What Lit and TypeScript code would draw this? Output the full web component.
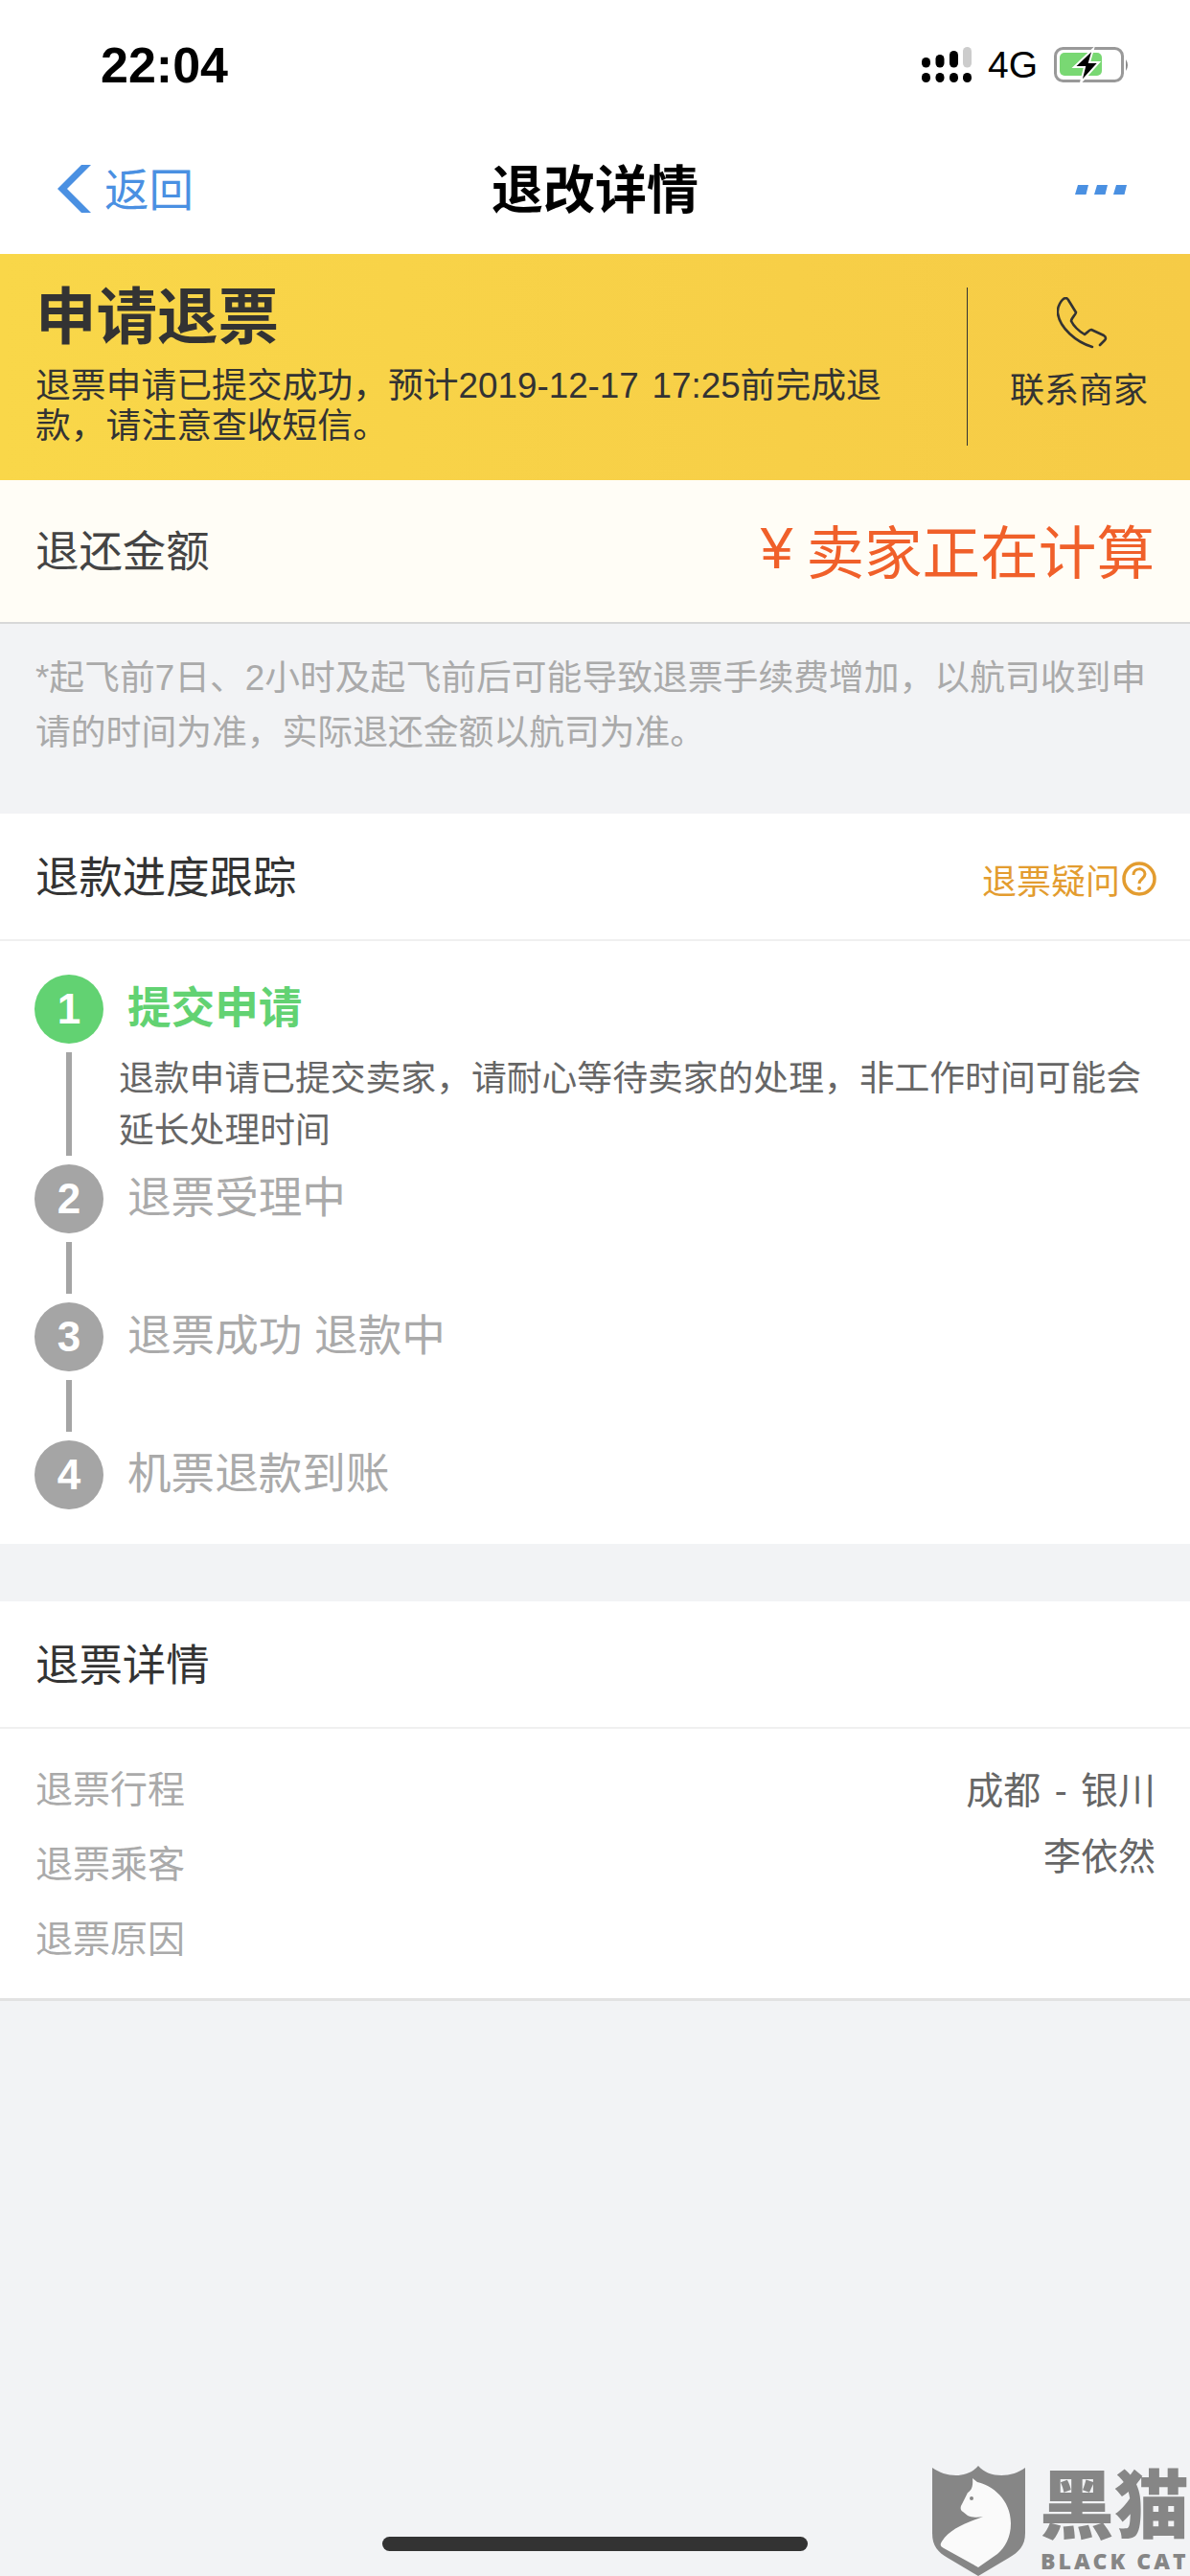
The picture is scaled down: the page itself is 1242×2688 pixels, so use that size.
import { LitElement, html, css, svg } from "lit";
import { customElement } from "lit/decorators.js";

const steps = [
  { n: 1, title: "提交申请", desc: "退款申请已提交卖家，请耐心等待卖家的处理，非工作时间可能会延长处理时间", on: true },
  { n: 2, title: "退票受理中", desc: "", on: false },
  { n: 3, title: "退票成功 退款中", desc: "", on: false },
  { n: 4, title: "机票退款到账", desc: "", on: false },
];

@customElement("app-root")
export class AppRoot extends LitElement {
  static styles = css`
    :host {
      display: block;
      position: relative;
      width: 1242px;
      height: 2688px;
      overflow: hidden;
      background: #f2f3f5;
      font-family: "Liberation Sans", "Noto Sans CJK SC", sans-serif;
      color: #333;
    }
    .head { background: #fff; height: 265px; display: flex; flex-direction: column; }
    .status { height: 136px; display: flex; align-items: center; padding: 0 62px 0 105px; }
    .time { font-size: 52px; font-weight: 700; color: #000; line-height: 136px; }
    .status-right { margin-left: auto; display: flex; align-items: center; }
    .net { font-size: 39px; color: #000; margin: 0 17px 0 17px; }
    .nav { position: relative; height: 122px; box-sizing: border-box; padding-bottom: 6px; display: flex; align-items: center; justify-content: center; }
    .back { position: absolute; left: 60px; top: 36px; display: flex; align-items: center; gap: 14px; color: #4a90e2; font-size: 46.5px; height: 50px; }
    .back span { margin-top: -5px; }
    .nav-title { font-size: 54px; font-weight: 700; color: #000; }
    .more { position: absolute; left: 1122px; top: 57px; }
    .banner { height: 236px; background: linear-gradient(90deg, #f9d749, #f6cb46); display: flex; }
    .banner-main { width: 1009px; box-sizing: border-box; padding: 33px 60px 0 37px; }
    .banner-title { font-size: 63.5px; font-weight: 700; color: #333; line-height: 66px; }
    .banner-desc { font-size: 36.8px; color: #333; line-height: 42px; margin-top: 18px; word-spacing: 3.5px; }
    .contact { flex: 1; margin-top: 35px; height: 165px; border-left: 1px solid #333; display: flex; flex-direction: column; align-items: center; box-sizing: border-box; }
    .contact svg { margin: 10px 0 0 8px; }
    .contact span { font-size: 36px; color: #333; margin-top: 22px; line-height: 44px; }
    .refund { height: 150px; background: #fffdf6; border-bottom: 2px solid #d8d8d8; box-sizing: border-box; display: flex; align-items: center; justify-content: space-between; padding: 0 37px 6px 37px; }
    .refund-label { font-size: 45.4px; color: #444; }
    .refund-value { font-size: 60.6px; color: #f0602a; display: flex; align-items: center; gap: 14px; }
    .note { height: 198px; box-sizing: border-box; padding: 28px 37px 0; font-size: 36.8px; line-height: 57px; color: #aaa; }
    .card { background: #fff; }
    .card-head { height: 133px; display: flex; align-items: center; justify-content: space-between; padding: 0 35px 6px 37px; border-bottom: 2px solid #f0f0f0; box-sizing: border-box; font-size: 45.4px; color: #333; }
    .faq { display: flex; align-items: center; gap: 2px; font-size: 36px; color: #e39c2f; margin-top: 10px; }
    .steps { height: 629px; box-sizing: border-box; padding: 35px 36px 0; }
    .step { display: grid; grid-template-columns: 72px 1fr; column-gap: 25px; }
    .circle { width: 72px; height: 72px; border-radius: 50%; background: #a5a5a5; color: #fff; font-size: 44px; font-weight: 700; display: flex; align-items: center; justify-content: center; }
    .on .circle { background: #62d272; }
    .step-title { font-size: 45.6px; line-height: 72px; color: #aaa; }
    .on .step-title { color: #62d272; font-weight: 700; }
    .rail { display: flex; justify-content: center; }
    .rail i { display: block; width: 6px; background: #a5a5a5; margin: 9px 0; height: 54px; }
    .on .rail i { height: 108px; }
    .desc { font-size: 36.8px; line-height: 54px; color: #666; margin-left: -9px; padding-top: 10px; box-sizing: border-box; }
    .gap { height: 60px; }
    .detail-body { height: 284px; box-sizing: border-box; border-bottom: 3px solid #e2e2e2; padding: 25px 37px 0; display: flex; justify-content: space-between; }
    .labels { display: flex; flex-direction: column; font-size: 39px; line-height: 78px; color: #aaa; }
    .values { text-align: right; font-size: 39px; line-height: 69px; color: #666; margin: 5px -1px 0 0; word-spacing: 3.5px; }
    .home { position: absolute; left: 399px; top: 2647px; width: 444px; height: 15px; border-radius: 8px; background: #333; }
    .mark { position: absolute; left: 973px; top: 2573px; width: 269px; height: 115px; color: #868686; }
    .mark svg { position: absolute; left: 0; top: 0; }
    .mark b { position: absolute; left: 112px; top: 4px; font-size: 78px; line-height: 78px; font-weight: 900; white-space: nowrap; }
    .mark em { position: absolute; left: 113px; top: 86px; font-style: normal; font-weight: 800; font-size: 23px; line-height: 26px; letter-spacing: 3px; white-space: nowrap; font-family: "Open Sans", sans-serif; }
  `;

  private signal() {
    const cols = [
      [960, 59, "#000"], [974.5, 56, "#000"], [989, 52, "#000"], [1003, 48, "#ccc"],
    ] as const;
    return html`<svg width="52" height="40" viewBox="960 47 52 40">
      ${cols.map(([x, y, c]) => svg`
        <rect x=${x} y=${y} width="9" height=${69.5 - y} rx="4.5" fill=${c}></rect>
        <rect x=${x} y="75" width="9" height="10" rx="4.5" fill="#000"></rect>`)}
    </svg>`;
  }

  render() {
    return html`
      <div class="head">
        <div class="status">
          <span class="time">22:04</span>
          <div class="status-right">
            ${this.signal()}
            <span class="net">4G</span>
            <svg width="80" height="40" viewBox="0 0 80 40">
              <rect x="1.5" y="2.5" width="70" height="34" rx="8" fill="none" stroke="#999" stroke-width="3"></rect>
              <rect x="6" y="7" width="44" height="24" rx="5" fill="#79d873"></rect>
              <path d="M75 14 Q79 20 75 26Z" fill="#888"></path>
              <path d="M41 3 L21 22 H32 L28 38 L47 17 H37 Z" fill="#000" stroke="#fff" stroke-width="2"></path>
            </svg>
          </div>
        </div>
        <div class="nav">
          <div class="back">
            <svg width="35" height="50" viewBox="0 0 35 50"><path d="M25 0H35L10 25L35 50H25L0 25Z" fill="#4a90e2"></path></svg>
            <span>返回</span>
          </div>
          <span class="nav-title">退改详情</span>
          <svg class="more" width="56" height="10" viewBox="0 0 56 10">
            <path d="M3 0H14L11.5 10H0ZM23 0H34L31.5 10H20ZM43 0H54L51.5 10H40Z" fill="#4a90e2"></path>
          </svg>
        </div>
      </div>

      <div class="banner">
        <div class="banner-main">
          <div class="banner-title">申请退票</div>
          <div class="banner-desc">退票申请已提交成功，预计2019-12-17 17:25前完成退款，请注意查收短信。</div>
        </div>
        <div class="contact">
          <svg width="54" height="54" viewBox="0 0 54 54">
            <path d="M37 52 C20 47 3 32 1 17 C0 10 5 2 9 1 C10 1 11 1 12 3 L20 16 C20 18 15 22 15 25 C18 31 24 36 29 39 C31 38 34 34 36 34 L49 40 C52 42 51 44 50 45 L45 50" fill="none" stroke="#333" stroke-width="2.6" stroke-linecap="round" stroke-linejoin="round"></path>
          </svg>
          <span>联系商家</span>
        </div>
      </div>

      <div class="refund">
        <span class="refund-label">退还金额</span>
        <span class="refund-value"><span>¥</span><span>卖家正在计算</span></span>
      </div>

      <div class="note">*起飞前7日、2小时及起飞前后可能导致退票手续费增加，以航司收到申请的时间为准，实际退还金额以航司为准。</div>

      <div class="card">
        <div class="card-head">
          <span>退款进度跟踪</span>
          <span class="faq">退票疑问
            <svg width="36" height="36" viewBox="0 0 36 36">
              <circle cx="18" cy="18" r="16" fill="none" stroke="#e39c2f" stroke-width="3.5"></circle>
              <path d="M12 14 C12 6 24 6 24 13 C24 18 18 18 18 23" fill="none" stroke="#e39c2f" stroke-width="3"></path>
              <circle cx="18" cy="28" r="2" fill="#e39c2f"></circle>
            </svg>
          </span>
        </div>
        <div class="steps">
          ${steps.map(
            (s, i) => html`
              <div class="step ${s.on ? "on" : ""}">
                <div class="circle">${s.n}</div>
                <div class="step-title">${s.title}</div>
                ${i < steps.length - 1
                  ? html`<div class="rail"><i></i></div><div class="desc">${s.desc}</div>`
                  : ""}
              </div>
            `
          )}
        </div>
      </div>

      <div class="gap"></div>

      <div class="card">
        <div class="card-head"><span>退票详情</span></div>
        <div class="detail-body">
          <div class="labels"><span>退票行程</span><span>退票乘客</span><span>退票原因</span></div>
          <div class="values"><div>成都 - 银川</div><div>李依然</div></div>
        </div>
      </div>

      <div class="mark">
        <svg width="100" height="115" viewBox="0 0 100 115">
          <path d="M0 2 C14 12 36 14 48 0 C60 14 84 12 97 2 V70 C97 84 90 90 80 96 L48 115 L16 96 C6 90 0 84 0 70 Z" fill="#868686"></path>
          <path d="M42 13 L47 17 C62 20 82 35 82 60 C82 75 76 85 68 92 L48 106 L12 86 C8 84 8 82 10 79 C18 66 34 60 53 53 C48 54 42 54 37 52 L32 48 C29 46 29 43 31 40 L37 28 C40 26 43 23 42 13Z" fill="#fafafa"></path>
          <circle cx="41" cy="34" r="2" fill="#868686"></circle>
        </svg>
        <b>黑猫</b>
        <em>BLACK CAT</em>
      </div>

      <div class="home"></div>
    `;
  }
}
